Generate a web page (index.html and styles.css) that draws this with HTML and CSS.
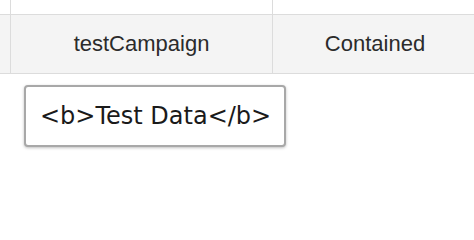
FILE: index.html
```html
<!DOCTYPE html>
<html>
<head>
<meta charset="utf-8">
<link rel="stylesheet" href="styles.css">
</head>
<body>
<div class="table">
  <div class="row row-top">
    <div class="cell cell-edge"></div>
    <div class="cell cell-name"></div>
    <div class="cell cell-status"></div>
  </div>
  <div class="row row-data">
    <div class="cell cell-edge"></div>
    <div class="cell cell-name">testCampaign</div>
    <div class="cell cell-status">Contained</div>
  </div>
</div>
<div class="tooltip">&lt;b&gt;Test Data&lt;/b&gt;</div>
</body>
</html>
```
FILE: styles.css
```css
html, body {
  margin: 0;
  padding: 0;
  background: #ffffff;
  overflow: hidden;
}
body {
  width: 474px;
  height: 211px;
}
.table {
  width: 474px;
  overflow: hidden;
}
.row {
  display: flex;
  border-bottom: 1px solid #dcdcdc;
}
.row-top {
  height: 14px;
  background: #ffffff;
}
.row-data {
  height: 58px;
  background: #f4f4f4;
}
.cell {
  display: flex;
  flex-shrink: 0;
  align-items: center;
  justify-content: center;
  font-family: "Liberation Sans", Arial, sans-serif;
  font-size: 22px;
  color: #2b2b2b;
  box-sizing: border-box;
}
.cell-edge {
  width: 11px;
  border-right: 1px solid #dcdcdc;
}
.cell-name {
  width: 262px;
  border-right: 1px solid #dcdcdc;
}
.cell-status {
  width: 204px;
}
.tooltip {
  display: inline-block;
  margin: 11px 0 0 24px;
  height: 58px;
  line-height: 58px;
  padding: 0 13px 0 14px;
  border: 2px solid #a8a8a8;
  border-radius: 4px;
  box-shadow: 0 1px 3px rgba(0,0,0,0.25);
  font-family: "DejaVu Sans", Verdana, sans-serif;
  font-size: 24px;
  color: #1a1a1a;
  background: #ffffff;
}
```
